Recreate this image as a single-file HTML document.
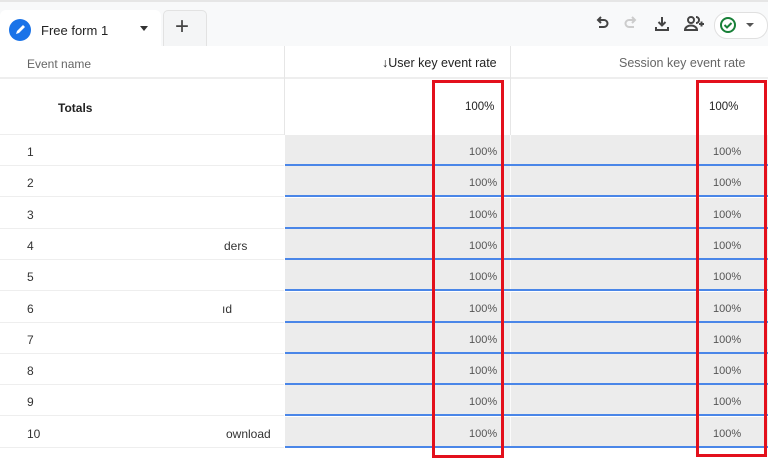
<!DOCTYPE html><html><head><style>
body{margin:0;width:768px;height:465px;background:#fff;font-family:"Liberation Sans",Arial,sans-serif;position:relative;overflow:hidden}
.a{position:absolute}
.row{position:absolute;left:0;width:768px;height:31px}
.l{position:absolute;left:0;width:284px;height:30px;border-bottom:1px solid #eee;background:#fff}
.g{position:absolute;left:285px;right:0;height:29px;background:#ececec;border-bottom:2px solid #4a86e8}
.n{position:absolute;left:27px;top:10px;font-size:12px;color:#333}
.v{position:absolute;font-size:11px;color:#555;top:11px}
</style></head><body>
<div class="a" style="left:0;top:0;width:768px;height:46px;background:#f8f9fa;border-top:2px solid #e6e6e6;box-sizing:border-box"></div>
<div class="a" style="left:0;top:10px;width:161px;height:37px;background:#fff;border-radius:6px 6px 0 0"></div>
<div class="a" style="left:9px;top:19px;width:22px;height:22px;border-radius:50%;background:#1a73e8"><svg width="22" height="22"><path d="M7 15l1-3 6-6 2 2-6 6z" fill="#fff"/></svg></div>
<div class="a" style="left:41px;top:23px;font-size:13px;color:#222">Free form 1</div>
<div class="a" style="left:140px;top:26px;width:0;height:0;border-left:4px solid transparent;border-right:4px solid transparent;border-top:5px solid #333"></div>
<div class="a" style="left:163px;top:10px;width:42px;height:35px;background:#f4f5f6;border:1px solid #e2e2e2;border-bottom:none;border-radius:5px 5px 0 0"></div>
<div class="a" style="left:175px;top:13px;font-size:24px;color:#444;font-weight:300">+</div>
<svg class="a" style="left:590px;top:12px" width="120" height="24" fill="none" stroke-width="2">
<path d="M9 8h5a3.5 3.5 0 010 7H9M11 5L8 8l3 3" stroke="#444"/>
<path d="M44 8h-5a3.5 3.5 0 000 7h5M42 5l3 3-3 3" stroke="#ccc"/>
<path d="M72 5v8M68.5 10l3.5 3.5 3.5-3.5M66 15v3h12v-3" stroke="#444"/>
<circle cx="101" cy="8" r="3" stroke="#444"/><path d="M95 18a6 4.5 0 0112 0z" stroke="#444"/><path d="M106 5a3 3 0 010 6M109 12h5M111.5 9.5v5" stroke="#444"/>
</svg>
<div class="a" style="left:714px;top:12px;width:52px;height:25px;border:1px solid #e0e0e0;border-radius:13px;background:#fff"></div>
<svg class="a" style="left:719px;top:16px" width="18" height="18" fill="none" stroke="#188038" stroke-width="2"><circle cx="9" cy="9" r="7"/><path d="M5.5 9l2.5 2.5 4.5-4.5"/></svg>
<div class="a" style="left:746px;top:23px;border-left:4px solid transparent;border-right:4px solid transparent;border-top:4px solid #555"></div>
<div class="a" style="left:0;top:46px;width:768px;height:31px;border-bottom:2px solid #eee"></div>
<div class="a" style="left:284px;top:46px;width:1px;height:89px;background:#e6e6e6"></div>
<div class="a" style="left:510px;top:46px;width:1px;height:89px;background:#e6e6e6"></div>
<div class="a" style="left:27px;top:57px;font-size:12px;color:#666">Event name</div>
<div class="a" style="left:382px;top:56px;font-size:12.5px;color:#222">↓User key event rate</div>
<div class="a" style="left:619px;top:56px;font-size:12.5px;color:#666">Session key event rate</div>
<div class="a" style="left:0;top:134px;width:284px;height:1px;background:#eee"></div>
<div class="a" style="left:58px;top:101px;font-size:12px;color:#222;font-weight:bold">Totals</div>
<div class="a" style="left:465px;top:101px;font-size:11.5px;color:#222">100%</div>
<div class="a" style="left:709px;top:101px;font-size:11.5px;color:#222">100%</div>
<div id="rows"></div>
<script>
var h='',lab=['','','','ders','','ıd','','','','ownload'],lx=[0,0,0,224,0,0,0,224,0,0];lx[5]=222;lx[9]=226;
for(var i=0;i<10;i++){var t=135+i*31.3;
h+='<div class="row" style="top:'+t+'px"><div class="l"></div><div class="g"></div><div class="a" style="left:510px;top:0;width:1px;height:29px;background:#fafafa"></div><div class="n">'+(i+1)+'</div>'+(lab[i]?'<div class="a" style="left:'+lx[i]+'px;top:10px;font-size:12px;color:#333">'+lab[i]+'</div>':'')+'<div class="v" style="left:469px">100%</div><div class="v" style="left:713px">100%</div></div>';}
document.getElementById('rows').innerHTML=h;
</script>
<div class="a" style="left:432px;top:80px;width:66px;height:372px;border:3px solid #e3101c"></div>
<div class="a" style="left:696px;top:80px;width:65px;height:371px;border:3px solid #e3101c"></div>
</body></html>
